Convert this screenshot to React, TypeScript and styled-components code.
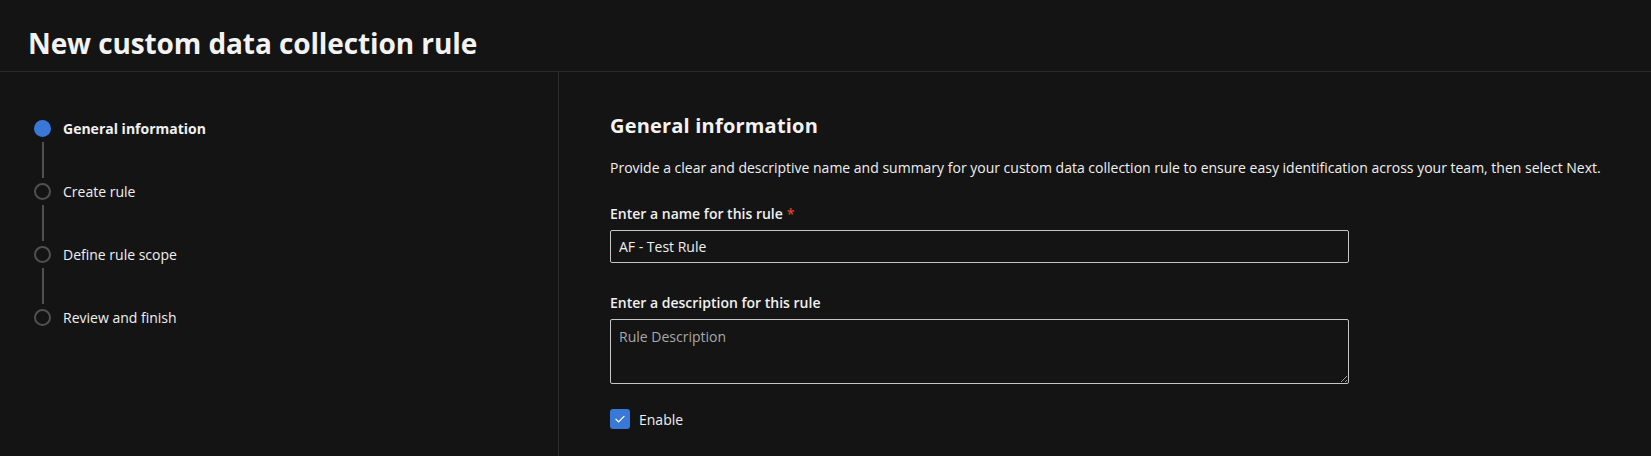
import React from 'react';
import styled, { createGlobalStyle } from 'styled-components';

const GlobalStyle = createGlobalStyle`
  html, body {
    margin: 0;
    padding: 0;
    background: #141414;
  }
  body {
    font-family: "Open Sans", "Noto Sans", "Liberation Sans", sans-serif;
    color: #f0f0f0;
  }
`;

const Page = styled.div`
  width: 1651px;
  height: 456px;
  background: #141414;
  display: flex;
  flex-direction: column;
  overflow: hidden;
`;

const Header = styled.header`
  height: 72px;
  box-sizing: border-box;
  border-bottom: 1px solid #2b2b2b;
  padding: 24px 0 0 28px;
`;

const Title = styled.h1`
  margin: 0;
  font-size: 28px;
  line-height: 38px;
  font-weight: 700;
  color: #f3f3f3;
  letter-spacing: -0.1px;
`;

const Body = styled.div`
  flex: 1;
  display: flex;
`;

const StepPanel = styled.aside`
  width: 559px;
  border-right: 1px solid #2b2b2b;
  padding: 48px 0 0 34px;
  box-sizing: border-box;
`;

const StepList = styled.ol`
  list-style: none;
  margin: 0;
  padding: 0;
`;

const Step = styled.li`
  display: flex;
  gap: 12px;
`;

const Indicator = styled.div`
  display: flex;
  flex-direction: column;
  align-items: center;
  width: 17px;
`;

const Dot = styled.span<{ $active: boolean }>`
  width: 17px;
  height: 17px;
  box-sizing: border-box;
  border-radius: 50%;
  background: ${({ $active }) => ($active ? '#3a78d8' : 'transparent')};
  border: ${({ $active }) => ($active ? 'none' : '2px solid #505050')};
`;

const Connector = styled.span`
  width: 2px;
  height: 36px;
  margin: 5px 0;
  background: #505050;
`;

const StepLabel = styled.span<{ $active: boolean }>`
  font-size: 14px;
  line-height: 17px;
  font-weight: ${({ $active }) => ($active ? 700 : 400)};
  color: #f0f0f0;
`;

const Content = styled.main`
  flex: 1;
  padding: 40px 0 0 51px;
`;

const Heading = styled.h2`
  margin: 0;
  font-size: 20px;
  line-height: 28px;
  font-weight: 700;
  color: #f3f3f3;
  letter-spacing: 0.2px;
`;

const Description = styled.p`
  margin: 18px 0 0;
  font-size: 14px;
  line-height: 20px;
  color: #f0f0f0;
`;

const Field = styled.div<{ $gap?: number }>`
  margin-top: ${({ $gap }) => $gap ?? 0}px;
  display: flex;
  flex-direction: column;
  width: 739px;
`;

const Label = styled.label`
  font-size: 14px;
  line-height: 20px;
  font-weight: 600;
  color: #f0f0f0;
  margin-bottom: 6px;
`;

const Required = styled.span`
  color: #e0412f;
  margin-left: 4px;
`;

const TextInput = styled.input`
  height: 33px;
  box-sizing: border-box;
  background: #141414;
  border: 1px solid #c6c6c6;
  border-radius: 2px;
  padding: 0 8px;
  font-family: inherit;
  font-size: 14px;
  color: #f0f0f0;
  outline: none;
`;

const TextArea = styled.textarea`
  height: 65px;
  box-sizing: border-box;
  background: #141414;
  border: 1px solid #c6c6c6;
  border-radius: 2px;
  padding: 7px 8px 6px;
  font-family: inherit;
  font-size: 14px;
  line-height: 20px;
  color: #f0f0f0;
  outline: none;
  resize: vertical;
  color-scheme: dark;

  &::placeholder {
    color: #a8a8a8;
  }
`;

const CheckRow = styled.label`
  margin-top: 25px;
  display: flex;
  align-items: center;
  gap: 9px;
  font-size: 14px;
  color: #f0f0f0;
`;

const Box = styled.span`
  width: 20px;
  height: 20px;
  border-radius: 3px;
  background: #3a78d8;
  display: flex;
  align-items: center;
  justify-content: center;
`;

const steps = ['General information', 'Create rule', 'Define rule scope', 'Review and finish'];

export default function App() {
  return (
    <>
      <GlobalStyle />
      <Page>
        <Header>
          <Title>New custom data collection rule</Title>
        </Header>
        <Body>
          <StepPanel>
            <StepList>
              {steps.map((s, i) => (
                <Step key={s}>
                  <Indicator>
                    <Dot $active={i === 0} />
                    {i < steps.length - 1 && <Connector />}
                  </Indicator>
                  <StepLabel $active={i === 0}>{s}</StepLabel>
                </Step>
              ))}
            </StepList>
          </StepPanel>
          <Content>
            <Heading>General information</Heading>
            <Description>
              Provide a clear and descriptive name and summary for your custom data collection rule to ensure easy
              identification across your team, then select Next.
            </Description>
            <Field $gap={26}>
              <Label>
                Enter a name for this rule<Required>*</Required>
              </Label>
              <TextInput defaultValue="AF - Test Rule" />
            </Field>
            <Field $gap={30}>
              <Label>Enter a description for this rule</Label>
              <TextArea placeholder="Rule Description" />
            </Field>
            <CheckRow>
              <Box>
                <svg width="12" height="12" viewBox="0 0 12 12" fill="none">
                  <path d="M2 6.3l2.6 2.6L10 3.4" stroke="#fff" strokeWidth="1.3" strokeLinecap="round" strokeLinejoin="round" />
                </svg>
              </Box>
              Enable
            </CheckRow>
          </Content>
        </Body>
      </Page>
    </>
  );
}
